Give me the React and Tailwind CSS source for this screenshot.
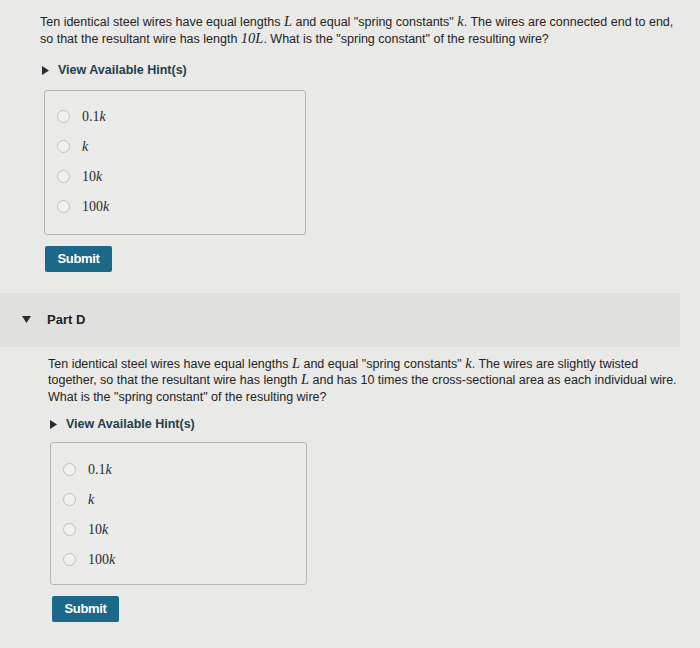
import React from "react";

const M = ({ children }) => (
  <span
    className="italic text-[14.5px] leading-none"
    style={{ fontFamily: '"Liberation Serif", "DejaVu Serif", serif' }}
  >
    {children}
  </span>
);

const Num = ({ n }) => (
  <span className="text-[14px] text-[#2a2a2a]" style={{ fontFamily: '"Liberation Serif", serif' }}>
    {n}
    <span className="italic">k</span>
  </span>
);

function HintLink() {
  return (
    <div className="flex items-center gap-[9px] font-bold text-[#243f4d] text-[12.5px]">
      <svg width="7" height="9" viewBox="0 0 7 9">
        <path d="M0 0 L7 4.5 L0 9 Z" fill="#2b2b2b" />
      </svg>
      View Available Hint(s)
    </div>
  );
}

function Options({ pb }) {
  const opts = ["0.1", "", "10", "100"];
  return (
    <div className={`border border-[#b4b4b2] rounded-[3px] bg-[#ebebe9] pt-[16px] pl-[12px] ${pb}`}>
      <div className="flex flex-col gap-[10px]">
        {opts.map((o, i) => (
          <div key={i} className="flex items-center gap-[12px] h-[20px]">
            <span className="w-[13px] h-[13px] rounded-full border border-[#c2c2c0] bg-[#f1f1ef]" />
            <Num n={o} />
          </div>
        ))}
      </div>
    </div>
  );
}

function SubmitBtn() {
  return (
    <button className="bg-[#1b6888] text-white font-bold text-[13px] rounded-[2px] w-[67px] h-[26px] tracking-tight">
      Submit
    </button>
  );
}

export default function App() {
  return (
    <div
      className="min-h-[648px] w-[700px] bg-[#e9e9e7] text-[#242424] overflow-hidden"
      style={{ fontFamily: '"Liberation Sans", Arial, sans-serif' }}
    >
      <div className="pl-[40px] pr-[8px] pt-[14px]">
        <p className="text-[12.5px] leading-[17px] whitespace-nowrap">
          Ten identical steel wires have equal lengths <M>L</M> and equal "spring constants" <M>k</M>. The wires are connected end to end,
          <br />
          so that the resultant wire has length <M>10L</M>. What is the "spring constant" of the resulting wire?
        </p>
        <div className="mt-[13px] pl-[2px]">
          <HintLink />
        </div>
        <div className="mt-[10px] ml-[4px] w-[262px]">
          <Options pb="pb-[17px]" />
        </div>
        <div className="mt-[11px] ml-[5px]">
          <SubmitBtn />
        </div>
      </div>

      <div className="mt-[21px] mr-[20px] h-[54px] bg-[#e0e0de] flex items-center pl-[22px] gap-[16px]">
        <svg width="9" height="7" viewBox="0 0 9 7">
          <path d="M0 0 L9 0 L4.5 7 Z" fill="#2b2b2b" />
        </svg>
        <span className="font-bold text-[13px] text-[#222]">Part D</span>
      </div>

      <div className="pl-[48px] pr-[20px] pt-[9px]">
        <p className="text-[12.5px] leading-[16.5px] whitespace-nowrap">
          Ten identical steel wires have equal lengths <M>L</M> and equal "spring constants" <M>k</M>. The wires are slightly twisted
          <br />
          together, so that the resultant wire has length <M>L</M> and has 10 times the cross-sectional area as each individual wire.
          <br />
          What is the "spring constant" of the resulting wire?
        </p>
        <div className="mt-[10px] pl-[2px]">
          <HintLink />
        </div>
        <div className="mt-[8px] ml-[2px] w-[257px]">
          <Options pb="pb-[15px]" />
        </div>
        <div className="mt-[11px] ml-[4px]">
          <SubmitBtn />
        </div>
      </div>
    </div>
  );
}
